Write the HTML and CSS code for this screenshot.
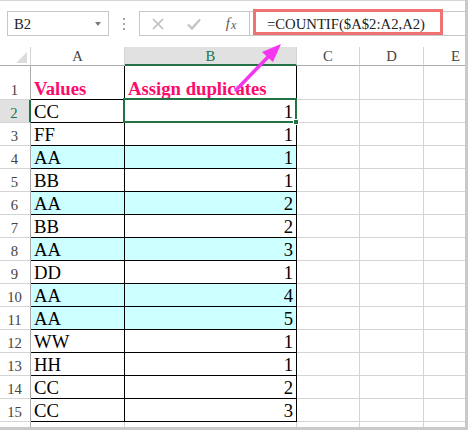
FILE: index.html
```html
<!DOCTYPE html>
<html>
<head>
<meta charset="utf-8">
<link rel="stylesheet" href="styles.css">
</head>
<body>
<div class="frame">
  <div class="toolbar">
    <div class="namebox"><span class="nb-text">B2</span><span class="caret"></span></div>
    <div class="dots"><i></i><i></i><i></i></div>
    <div class="btns">
      <span class="slot"><svg width="12" height="12" viewBox="0 0 12 12"><path d="M1 1L11 11M11 1L1 11" stroke="#bdbdbd" stroke-width="1.6" fill="none"/></svg></span>
      <span class="slot"><svg width="14" height="12" viewBox="0 0 14 12"><path d="M1 6.5L5 10.5L13 1.5" stroke="#c4c4c4" stroke-width="2.4" fill="none"/></svg></span>
      <span class="slot fx"><i>f</i><i class="fx-x">x</i></span>
    </div>
    <div class="fbar">
      <span class="formula">=COUNTIF($A$2:A2,A2)</span>
      <span class="hl"></span>
    </div>
  </div>
  <div class="sheet">
    <div class="c ch corner"><span class="tri"></span></div>
    <div class="c ch">A</div>
    <div class="c ch sel">B</div>
    <div class="c ch">C</div>
    <div class="c ch">D</div>
    <div class="c ch">E</div>

    <div class="c rh">1</div>
    <div class="c a t">Values</div>
    <div class="c b t top">Assign duplicates</div>
    <div class="c"></div><div class="c"></div><div class="c"></div>

    <div class="c rh rsel">2</div>
    <div class="c a">CC</div>
    <div class="c b active">1<span class="selbox"><span class="handle"></span></span></div>
    <div class="c"></div><div class="c"></div><div class="c"></div>

    <div class="c rh">3</div>
    <div class="c a">FF</div>
    <div class="c b">1</div>
    <div class="c"></div><div class="c"></div><div class="c"></div>

    <div class="c rh">4</div>
    <div class="c a cy">AA</div>
    <div class="c b cy">1</div>
    <div class="c"></div><div class="c"></div><div class="c"></div>

    <div class="c rh">5</div>
    <div class="c a">BB</div>
    <div class="c b">1</div>
    <div class="c"></div><div class="c"></div><div class="c"></div>

    <div class="c rh">6</div>
    <div class="c a cy">AA</div>
    <div class="c b cy">2</div>
    <div class="c"></div><div class="c"></div><div class="c"></div>

    <div class="c rh">7</div>
    <div class="c a">BB</div>
    <div class="c b">2</div>
    <div class="c"></div><div class="c"></div><div class="c"></div>

    <div class="c rh">8</div>
    <div class="c a cy">AA</div>
    <div class="c b cy">3</div>
    <div class="c"></div><div class="c"></div><div class="c"></div>

    <div class="c rh">9</div>
    <div class="c a">DD</div>
    <div class="c b">1</div>
    <div class="c"></div><div class="c"></div><div class="c"></div>

    <div class="c rh">10</div>
    <div class="c a cy">AA</div>
    <div class="c b cy">4</div>
    <div class="c"></div><div class="c"></div><div class="c"></div>

    <div class="c rh">11</div>
    <div class="c a cy">AA</div>
    <div class="c b cy">5</div>
    <div class="c"></div><div class="c"></div><div class="c"></div>

    <div class="c rh">12</div>
    <div class="c a">WW</div>
    <div class="c b">1</div>
    <div class="c"></div><div class="c"></div><div class="c"></div>

    <div class="c rh">13</div>
    <div class="c a">HH</div>
    <div class="c b">1</div>
    <div class="c"></div><div class="c"></div><div class="c"></div>

    <div class="c rh">14</div>
    <div class="c a">CC</div>
    <div class="c b">2</div>
    <div class="c"></div><div class="c"></div><div class="c"></div>

    <div class="c rh">15</div>
    <div class="c a">CC</div>
    <div class="c b">3</div>
    <div class="c"></div><div class="c"></div><div class="c"></div>

    <div class="c rh">16</div>
    <div class="c"></div><div class="c"></div><div class="c"></div><div class="c"></div><div class="c"></div>
  </div>
  <svg class="arrow" width="465" height="427" viewBox="0 0 465 427">
    <path d="M236 90L268 57" stroke="#f535f0" stroke-width="3.5" stroke-linecap="round" fill="none"/>
    <polygon points="281,44 262,52 273,62" fill="#f535f0"/>
  </svg>
</div>
</body>
</html>
```

FILE: styles.css
```css
html, body {
  margin: 0;
  padding: 0;
}
body {
  background: #c9c9c9;
  width: 468px;
  height: 430px;
  overflow: hidden;
  font-family: "Liberation Serif", "Times New Roman", serif;
}
.frame {
  position: relative;
  width: 465px;
  height: 427px;
  background: #fff;
  overflow: hidden;
}
.toolbar {
  height: 46px;
  border-top: 1px solid #d6d6d6;
  border-right: 1px solid #d6d6d6;
  width: 462px;
  display: flex;
  align-items: flex-start;
  padding-left: 7px;
  box-sizing: content-box;
}
.namebox {
  margin-top: 10px;
  width: 102px;
  height: 25px;
  box-sizing: border-box;
  border: 1px solid #c6c6c6;
  display: flex;
  align-items: center;
  justify-content: space-between;
  padding: 0 7px 0 6px;
}
.nb-text {
  font-size: 14.7px;
  color: #222;
  line-height: 18px;
  padding-top: 1px;
}
.caret {
  width: 0;
  height: 0;
  border-left: 3.5px solid transparent;
  border-right: 3.5px solid transparent;
  border-top: 4px solid #7a7a7a;
}
.dots {
  margin-left: 14px;
  margin-top: 17px;
  display: flex;
  flex-direction: column;
  gap: 3px;
}
.dots i {
  display: block;
  width: 2px;
  height: 2px;
  background: #a6a6a6;
}
.btns {
  margin-left: 14px;
  margin-top: 10px;
  height: 25px;
  box-sizing: border-box;
  border: 1px solid #c6c6c6;
  border-right: none;
  display: flex;
}
.slot {
  width: 36px;
  display: flex;
  align-items: center;
  justify-content: center;
}
.fx {
  font-size: 15px;
  color: #5a5a5a;
  padding-left: 1px;
}
.fx i {
  font-style: italic;
}
.fx-x {
  font-size: 12px;
  margin-left: 1px;
  padding-top: 3px;
}
.fbar {
  position: relative;
  flex: 1;
  margin-top: 10px;
  height: 25px;
  box-sizing: border-box;
  border: 1px solid #c6c6c6;
  border-right: none;
  display: flex;
  align-items: center;
  padding-left: 17px;
}
.formula {
  font-size: 14.7px;
  color: #222;
  line-height: 18px;
  padding-top: 1px;
}
.hl {
  position: absolute;
  left: 3px;
  top: -3px;
  width: 190px;
  height: 26px;
  box-sizing: border-box;
  border: 3px solid #f07373;
}
.sheet {
  display: grid;
  grid-template-columns: 31px 94px 172px 63px 64px 64px;
  grid-template-rows: 19px 34px repeat(15, 23px);
}
.c {
  box-sizing: border-box;
  border-right: 1px solid #d4d4d4;
  border-bottom: 1px solid #d4d4d4;
  font-size: 18.7px;
  line-height: 20px;
  color: #000;
  display: flex;
  align-items: flex-end;
  white-space: nowrap;
  overflow: visible;
  min-width: 0;
}
.ch {
  font-size: 14.7px;
  line-height: 18px;
  color: #444;
  justify-content: center;
  align-items: center;
  border-bottom-color: #ababab;
}
.corner {
  position: relative;
  border-right-color: #d4d4d4;
}
.tri {
  position: absolute;
  right: 3px;
  bottom: 2px;
  width: 0;
  height: 0;
  border-left: 11px solid transparent;
  border-bottom: 11px solid #dcdcdc;
}
.ch.sel {
  background: #e1e1e1;
  color: #217346;
  border-bottom: 2px solid #217346;
}
.rh {
  font-size: 14.7px;
  line-height: 18px;
  color: #444;
  justify-content: center;
  border-right-color: #ababab;
  padding-right: 1px;
}
.rh.rsel {
  background: #e1e1e1;
  color: #217346;
  border-right: 2px solid #217346;
}
.a {
  border-right-color: #000;
  border-bottom-color: #000;
  padding-left: 3px;
}
.b {
  border-right-color: #000;
  border-bottom-color: #000;
  justify-content: flex-end;
  padding-right: 3px;
}
.b.t {
  justify-content: flex-start;
  padding-left: 3px;
  padding-right: 0;
}
.t {
  color: #ff0a6c;
  font-weight: bold;
}
.cy {
  background: #ccffff;
}
.active {
  position: relative;
}
.selbox {
  position: absolute;
  left: -2px;
  top: -2px;
  width: calc(100% + 3px);
  height: calc(100% + 3px);
  box-sizing: border-box;
  border: 2px solid #217346;
}
.handle {
  position: absolute;
  right: -4px;
  bottom: -4px;
  width: 6px;
  height: 6px;
  background: #217346;
  box-sizing: border-box;
  border: 1px solid #fff;
}
.arrow {
  position: absolute;
  left: 0;
  top: 0;
  pointer-events: none;
}
```
